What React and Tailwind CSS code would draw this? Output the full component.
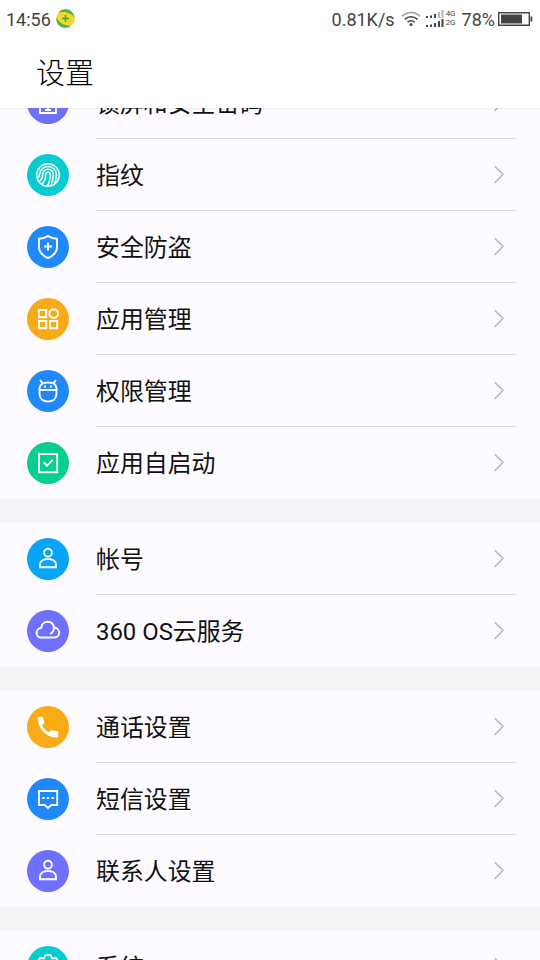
import { clsx } from "clsx";

const icons = {
  lock: (
    <>
      <path d="M13 13h16v18H13z" />
      <path d="M21 23v5M18 28h6" />
    </>
  ),
  fingerprint: (
    <g strokeWidth="1.5">
      <circle cx="21" cy="21" r="11.3" />
      <path d="M10.300 24.200c1.700-.9 2.400-2.200 2.400-4.200a8.300 7.500 0 0 1 16.600 0c0 3.500-.2 5.500-1.500 9" />
      <path d="M12 27.300c2.400-1.300 3.700-3.600 3.700-7.300a5.300 4.700 0 0 1 10.600 0c0 4.500-.6 7.800-2.300 11.500" />
      <path d="M14.800 30c2.600-2.200 3.900-5.200 3.900-9.500a2.300 2.300 0 0 1 4.600 0c0 4.500-.9 8.200-3 11.500" />
    </g>
  ),
  shield: (
    <>
      <path d="M21 10c-2.400 1.800-5.500 2.600-9 2.800v8.500c0 4.600 3.700 8.300 9 10.900 5.300-2.600 9-6.300 9-10.900v-8.500c-3.500-.2-6.600-1-9-2.800z" />
      <path d="M21 16.500v8M17 20.500h8" />
    </>
  ),
  apps: (
    <>
      <path d="M12 12h7.200v7.200H12zM12 23h7.200v7.200H12zM23 23h7.200v7.200H23z" />
      <path d="m24.900 11.500h3.600l2.400 2.400v3.400l-2.400 2.400h-3.600l-2.400-2.400v-3.400z" />
    </>
  ),
  robot: (
    <>
      <path d="M12.500 20h17v3.500c0 4.700-3 8-8.500 8s-8.500-3.300-8.500-8z" />
      <path d="M12.500 20v-1.500c0-3.700 3-6 8.500-6s8.500 2.300 8.500 6V20" />
      <path d="m13 10 2.800 3.600M29 10l-2.800 3.600" />
      <path d="M17.200 16.500h1.800M23 16.500h1.800" />
    </>
  ),
  check: (
    <>
      <path d="M12 12h18.200v18.200H12z" />
      <path d="m16.600 20.400 3.400 3.300 5.700-5.800" />
    </>
  ),
  person: (
    <>
      <circle cx="21" cy="14.700" r="3.900" />
      <path d="M13 29.200v-2.400c0-3.500 3.300-5.800 8-5.800s8 2.300 8 5.800v2.400z" />
    </>
  ),
  cloud: (
    <>
      <path d="M14.200 18c.3-3.800 3-6.300 6.600-6.300 3.300 0 5.800 2.100 6.100 5.800 3 .2 5.300 2.300 5.300 5.100s-2.100 4.900-5 4.900H14.400c-2.800 0-4.800-1.900-4.800-4.600 0-2.600 1.900-4.700 4.600-4.900z" />
      <path d="M26.900 17.500c.1 2.900-1.200 5.100-3.700 6.300" />
    </>
  ),
  phone: (
    <path
      fill="#fff"
      stroke="none"
      d="M11.900 11h3.400c.6 0 1 .3 1.100.9l.9 5c.1.500-.1.900-.5 1.100l-1.900 1c1.600 3.100 4.100 5.700 7.200 7.300l1.200-1.500c.3-.4.700-.6 1.200-.5l5.600.9c.7.100 1.100.5 1.100 1.200v3.700c0 .8-.6 1.400-1.400 1.400C19.400 31.500 11 23.300 11 12.500c0-.9.200-1.500.9-1.500z"
    />
  ),
  message: (
    <>
      <path d="M12 13h18.200v14h-6l-3.200 3-3.200-3H12z" />
      <path d="M15.300 20h2.400M19.900 20h2.400M24.500 20h2.400" strokeWidth="2" />
    </>
  ),
  gear: (
    <>
      <path d="m16.800 12.500 2-3.600h4.400l2 3.600 3.800-.5 2.300 3.800-2.300 3.200v4l2.300 3.200-2.300 3.800-3.800-.5-2 3.600h-4.400l-2-3.600-3.800.5-2.300-3.800 2.300-3.200v-4l-2.300-3.200L13 12z" />
      <circle cx="21" cy="21" r="4" />
    </>
  ),
};

const groups = [
  [
    { label: "锁屏和安全密码", icon: "lock", color: "bg-[#6f70ff]" },
    { label: "指纹", icon: "fingerprint", color: "bg-[#05ccd1]" },
    { label: "安全防盗", icon: "shield", color: "bg-[#2088fa]" },
    { label: "应用管理", icon: "apps", color: "bg-[#f8aa17]" },
    { label: "权限管理", icon: "robot", color: "bg-[#2088fa]" },
    { label: "应用自启动", icon: "check", color: "bg-[#05ce91]" },
  ],
  [
    { label: "帐号", icon: "person", color: "bg-[#06a5f8]" },
    { label: "360 OS云服务", icon: "cloud", color: "bg-[#6f70ff]" },
  ],
  [
    { label: "通话设置", icon: "phone", color: "bg-[#f8aa17]" },
    { label: "短信设置", icon: "message", color: "bg-[#2088fa]" },
    { label: "联系人设置", icon: "person", color: "bg-[#6f70ff]" },
  ],
  [{ label: "系统", icon: "gear", color: "bg-[#05ccd1]" }],
];

function SignalBars({ dim }) {
  return (
    <svg width="18" height="8" viewBox="0 0 18 8" fill="#444">
      <path d="M0 6h2v2H0zM4 5.500h2V8H4zM8 4h2v4H8z" />
      <path d="M12 2h2v6h-2zM15.500 0h2v8h-2z" opacity={dim ? 0.4 : 1} />
    </svg>
  );
}

function StatusBar() {
  return (
    <div className="flex h-[38px] items-center pl-1.5 pr-[7px] text-[18px] leading-[38px] text-[#444]">
      <span className="pt-0.5">14:56</span>
      <svg className="ml-[5px] -mt-px" width="19" height="19" viewBox="0 0 19 19">
        <circle cx="9.500" cy="9.500" r="9.200" fill="#f6d52c" />
        <path d="M2.500 3.600C6-.8 13-.8 16.500 3.800c1 1.300 1.700 3 1.900 4.600C15.500 4.200 9 2 2.500 3.600z" fill="#48b649" />
        <path d="M.4 8.500c2.200 5 7.100 8 14.600 8.400C9.500 21.500-.8 17.500.4 8.500z" fill="#48b649" />
        <path d="M9.500 6v7M6 9.500h7" stroke="#48a642" strokeWidth="1.500" />
      </svg>
      <span className="ml-auto pt-0.5">0.81K/s</span>
      <svg className="ml-1.5 -mt-px" width="20" height="16" viewBox="0 0 20 16" fill="none" stroke="#444" strokeWidth="1.600">
        <path d="M1 5.300c5.200-5.100 12.800-5.100 18 0" opacity=".5" />
        <path d="M3.700 8.300c3.700-3.500 8.900-3.500 12.600 0M6.500 11.200c2-1.900 5-1.900 7 0" />
        <circle cx="10" cy="13.500" r="1.500" fill="#444" stroke="none" />
      </svg>
      <div className="ml-[5px] -mt-px flex flex-col gap-px">
        <div className="flex h-2 items-center gap-0.5">
          <SignalBars dim />
          <span className="text-[8px] leading-none">4G</span>
        </div>
        <div className="flex h-2 items-center gap-0.5">
          <SignalBars />
          <span className="text-[8px] leading-none">2G</span>
        </div>
      </div>
      <span className="ml-1.5 pt-0.5">78%</span>
      <svg className="ml-[3px] -mt-px" width="35" height="14" viewBox="0 0 35 14">
        <path d="M.7.7h30.600v12.600H.7z" fill="none" stroke="#444" strokeWidth="1.400" />
        <path d="M3 2.500h21v9H3zM32.500 4.500h1.800v5h-1.800z" fill="#444" />
      </svg>
    </div>
  );
}

function SettingRow({ item, last }) {
  return (
    <li className="flex h-[72px] pl-[27px] pr-6">
      <div className={clsx("mt-[15px] size-[42px] shrink-0 rounded-full", item.color)}>
        <svg width="42" height="42" viewBox="0 0 42 42" fill="none" stroke="#fff" strokeWidth="1.900">
          {icons[item.icon]}
        </svg>
      </div>
      <div
        className={clsx(
          "ml-[27px] flex flex-1 items-center justify-between border-b pr-3",
          last ? "border-transparent" : "border-[#dcdadd]",
        )}
      >
        <span className="pt-0.5 text-[23.9px] leading-9 text-[#111]">{item.label}</span>
        <svg width="10" height="18" viewBox="0 0 10 18" fill="none" stroke="#b5b3b6" strokeWidth="1.400">
          <path d="m.7.2 8.300 8.300-8.300 8.300" />
        </svg>
      </div>
    </li>
  );
}

export default function App() {
  return (
    <div className="flex h-[960px] w-[540px] flex-col overflow-hidden bg-[#f4f3f6] font-['Roboto','Noto_Sans_CJK_SC',sans-serif]">
      <header className="relative z-10 h-[108px] shrink-0 bg-white shadow-[0_0_3px_rgba(0,0,0,0.14)]">
        <StatusBar />
        <h1 className="pl-9 pt-3.5 text-[29px] font-light leading-[44px] text-black">设置</h1>
      </header>

      {/* List is scrolled, so the first row sits partly under the header */}
      <main className="-mt-[41px] flex flex-col gap-6">
        {groups.map((group, i) => (
          <ul key={i} className="bg-[#fdfbff]">
            {group.map((item, j) => (
              <SettingRow key={item.label} item={item} last={j === group.length - 1} />
            ))}
          </ul>
        ))}
      </main>
    </div>
  );
}
